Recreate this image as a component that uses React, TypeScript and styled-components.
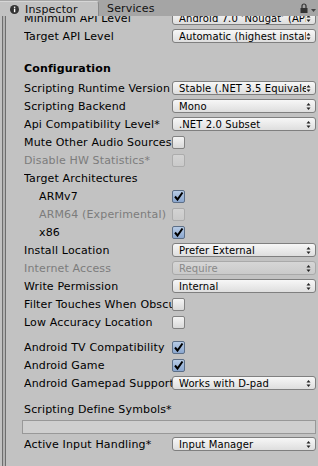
import { FC, ReactNode } from 'react';
import styled, { createGlobalStyle, css } from 'styled-components';

const GlobalStyle = createGlobalStyle`
  html, body {
    margin: 0;
    padding: 0;
    background: #c2c2c2;
  }
`;

const Root = styled.div`
  width: 318px;
  height: 466px;
  display: flex;
  flex-direction: column;
  overflow: hidden;
  background: #c2c2c2;
  font-family: 'DejaVu Sans', 'Liberation Sans', sans-serif;
  font-size: 11px;
  letter-spacing: 0.15px;
  color: #000;
`;

const TabBar = styled.div`
  height: 16px;
  flex-shrink: 0;
  display: flex;
  align-items: flex-end;
  background: #a5a5a5;
  position: relative;
  z-index: 1;
`;

const Tab = styled.div<{ $active?: boolean }>`
  height: 15px;
  display: flex;
  align-items: center;
  gap: 6px;
  box-sizing: border-box;
  padding-left: ${({ $active }) => ($active ? '10px' : '8px')};
  width: ${({ $active }) => ($active ? '99px' : '70px')};
  font-size: 11px;
  color: #111;
  ${({ $active }) =>
    $active &&
    css`
      background: #c2c2c2;
      border-top-right-radius: 3px;
      border-right: 1px solid #8a8a8a;
      border-top: 1px solid #d6d6d6;
    `}
`;

const TabTools = styled.div`
  margin-left: auto;
  display: flex;
  align-items: center;
  gap: 3px;
  padding-right: 2px;
  height: 16px;
`;

const Body = styled.div`
  flex: 1;
  display: flex;
  overflow: hidden;
`;

const Gutter = styled.div`
  width: 2px;
  margin-left: 2px;
  border-left: 1px solid #6e6e6e;
  border-right: 1px solid #6e6e6e;
  background: #b2b2b2;
  flex-shrink: 0;
`;

const Scroll = styled.div`
  flex: 1;
  overflow: hidden;
  padding-left: 18px;
  padding-right: 2px;
`;

const Inner = styled.div`
  margin-top: -7px;
  display: flex;
  flex-direction: column;
`;

const Row = styled.div<{ $gapTop?: number }>`
  height: 18px;
  display: flex;
  align-items: center;
  margin-top: ${({ $gapTop }) => $gapTop ?? 0}px;
  flex-shrink: 0;
`;

const Label = styled.div<{ $indent?: boolean; $disabled?: boolean; $wide?: boolean }>`
  width: ${({ $indent, $wide }) => ($wide ? 292 : $indent ? 133 : 148)}px;
  padding-left: ${({ $indent }) => ($indent ? 15 : 0)}px;
  white-space: nowrap;
  overflow: hidden;
  flex-shrink: 0;
  color: ${({ $disabled }) => ($disabled ? '#7c7c7c' : '#000')};
`;

const Header = styled.div`
  height: 18px;
  display: flex;
  align-items: center;
  font-weight: bold;
  margin-top: 14px;
  margin-bottom: 2px;
`;

const Popup = styled.div<{ $disabled?: boolean }>`
  width: 144px;
  height: 14px;
  box-sizing: border-box;
  border: 1px solid ${({ $disabled }) => ($disabled ? '#a9a9a9' : '#7f7f7f')};
  border-radius: 3px;
  background: ${({ $disabled }) =>
    $disabled
      ? 'linear-gradient(#d6d6d6, #cacaca)'
      : 'linear-gradient(#f7f7f7, #dedede)'};
  display: flex;
  align-items: center;
  padding: 0 4px 0 6px;
  font-size: 10px;
  letter-spacing: 0.1px;
  color: ${({ $disabled }) => ($disabled ? '#888' : '#000')};
`;

const PopupText = styled.span`
  flex: 1;
  white-space: nowrap;
  overflow: hidden;
`;

const Box = styled.div<{ $checked?: boolean; $disabled?: boolean }>`
  width: 13px;
  height: 13px;
  box-sizing: border-box;
  border-radius: 2px;
  border: 1px solid
    ${({ $checked, $disabled }) =>
      $disabled ? '#acacac' : $checked ? '#5d6f87' : '#828282'};
  background: ${({ $checked, $disabled }) =>
    $checked
      ? 'linear-gradient(#b7cbe5, #8ba7cf)'
      : $disabled
        ? 'linear-gradient(#d3d3d3, #c9c9c9)'
        : 'linear-gradient(#f4f4f4, #d9d9d9)'};
  display: flex;
  align-items: center;
  justify-content: center;
`;

const TextField = styled.div`
  height: 14px;
  box-sizing: border-box;
  margin: 2px 0 1px -2px;
  border: 1px solid #989898;
  background: #cfcfcf;
  flex-shrink: 0;
`;

const Arrows = () => (
  <svg width="5" height="9" viewBox="0 0 5 9">
    <polygon points="0.5,3.5 2.5,1 4.5,3.5" fill="#222" />
    <polygon points="0.5,5.5 2.5,8 4.5,5.5" fill="#222" />
  </svg>
);

const Check = () => (
  <svg width="11" height="11" viewBox="0 0 11 11">
    <path d="M2 5.5 L4.5 8.5 L9.5 1.5" stroke="#000" strokeWidth="2" fill="none" />
  </svg>
);

const InfoIcon = () => (
  <svg width="9" height="9" viewBox="0 0 9 9">
    <circle cx="4.5" cy="4.5" r="4.5" fill="#333" />
    <rect x="3.9" y="3.6" width="1.4" height="3.6" fill="#fff" />
    <rect x="3.9" y="1.6" width="1.4" height="1.3" fill="#fff" />
  </svg>
);

const LockIcon = () => (
  <svg width="8" height="10" viewBox="0 0 8 10">
    <path d="M2 5 V3 a2 2 0 0 1 4 0 V5" stroke="#333" strokeWidth="1.2" fill="none" />
    <rect x="0.5" y="5" width="7" height="5" fill="#333" />
  </svg>
);

const MenuIcon = () => (
  <svg width="5" height="4" viewBox="0 0 5 4" style={{ marginTop: 6 }}>
    <polygon points="0,0 5,0 2.5,3" fill="#444" />
  </svg>
);

type Field =
  | { kind: 'popup'; value: string; disabled?: boolean }
  | { kind: 'check'; checked?: boolean; disabled?: boolean };

const PropRow: FC<{
  label: string;
  field?: Field;
  indent?: boolean;
  disabled?: boolean;
  gapTop?: number;
}> = ({ label, field, indent, disabled, gapTop }) => {
  let control: ReactNode = null;
  if (field?.kind === 'popup') {
    control = (
      <Popup $disabled={field.disabled}>
        <PopupText>{field.value}</PopupText>
        <Arrows />
      </Popup>
    );
  } else if (field?.kind === 'check') {
    control = (
      <Box $checked={field.checked} $disabled={field.disabled}>
        {field.checked && <Check />}
      </Box>
    );
  }
  return (
    <Row $gapTop={gapTop}>
      <Label $indent={indent} $disabled={disabled} $wide={!field}>
        {label}
      </Label>
      {control}
    </Row>
  );
};

const App: FC = () => (
  <Root>
    <GlobalStyle />
    <TabBar>
      <Tab $active>
        <InfoIcon />
        <span>Inspector</span>
      </Tab>
      <Tab>Services</Tab>
      <TabTools>
        <LockIcon />
        <MenuIcon />
      </TabTools>
    </TabBar>
    <Body>
      <Gutter />
      <Scroll>
        <Inner>
          <PropRow
            label="Minimum API Level"
            field={{ kind: 'popup', value: 'Android 7.0 \u2018Nougat\u2019 (API level 24)' }}
          />
          <PropRow
            label="Target API Level"
            field={{ kind: 'popup', value: 'Automatic (highest installed)' }}
          />
          <Header>Configuration</Header>
          <PropRow
            label="Scripting Runtime Version"
            field={{ kind: 'popup', value: 'Stable (.NET 3.5 Equivalent)' }}
          />
          <PropRow label="Scripting Backend" field={{ kind: 'popup', value: 'Mono' }} />
          <PropRow
            label="Api Compatibility Level*"
            field={{ kind: 'popup', value: '.NET 2.0 Subset' }}
          />
          <PropRow label="Mute Other Audio Sources" field={{ kind: 'check' }} />
          <PropRow
            label="Disable HW Statistics*"
            disabled
            field={{ kind: 'check', disabled: true }}
          />
          <PropRow label="Target Architectures" />
          <PropRow label="ARMv7" indent field={{ kind: 'check', checked: true }} />
          <PropRow
            label="ARM64 (Experimental)"
            indent
            disabled
            field={{ kind: 'check', disabled: true }}
          />
          <PropRow label="x86" indent field={{ kind: 'check', checked: true }} />
          <PropRow label="Install Location" field={{ kind: 'popup', value: 'Prefer External' }} />
          <PropRow
            label="Internet Access"
            disabled
            field={{ kind: 'popup', value: 'Require', disabled: true }}
          />
          <PropRow label="Write Permission" field={{ kind: 'popup', value: 'Internal' }} />
          <PropRow label="Filter Touches When Obscured" field={{ kind: 'check' }} />
          <PropRow label="Low Accuracy Location" field={{ kind: 'check' }} />
          <PropRow
            label="Android TV Compatibility"
            gapTop={7}
            field={{ kind: 'check', checked: true }}
          />
          <PropRow label="Android Game" field={{ kind: 'check', checked: true }} />
          <PropRow
            label="Android Gamepad Support Level"
            field={{ kind: 'popup', value: 'Works with D-pad' }}
          />
          <PropRow label="Scripting Define Symbols*" gapTop={8} />
          <TextField />
          <PropRow
            label="Active Input Handling*"
            field={{ kind: 'popup', value: 'Input Manager' }}
          />
        </Inner>
      </Scroll>
    </Body>
  </Root>
);

export default App;
